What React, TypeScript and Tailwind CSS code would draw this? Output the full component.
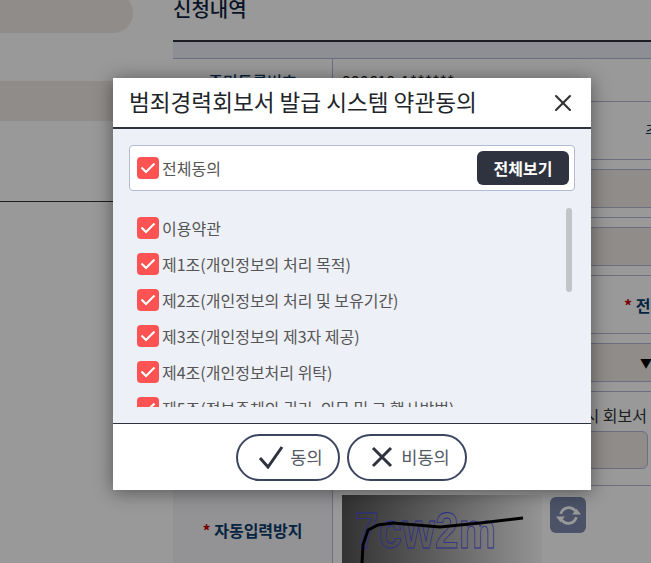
import { X } from 'lucide-react';

const font = { fontFamily: '"Noto Sans CJK KR", "Noto Sans", sans-serif' };

const terms = [
  '이용약관',
  '제1조(개인정보의 처리 목적)',
  '제2조(개인정보의 처리 및 보유기간)',
  '제3조(개인정보의 제3자 제공)',
  '제4조(개인정보처리 위탁)',
  '제5조(정보주체의 권리, 의무 및 그 행사방법)',
];

function CheckBox() {
  return (
    <span className="w-[22px] h-[22px] shrink-0 rounded bg-[#ff5252] flex items-center justify-center">
      <svg width="16" height="12" viewBox="0 0 16 12" fill="none" stroke="#fff" strokeWidth="2.2">
        <path d="M1.5 5.5 L6 10 L14.5 1.5" />
      </svg>
    </span>
  );
}

function Gap() {
  return <div className="h-[10px] border-b border-[#b2bad5]" />;
}

function Field() {
  return <div className="h-[38px] border-b border-[#b2bad5] bg-[#eee9e6]" />;
}

function Captcha() {
  return (
    <svg width="200" height="68" viewBox="0 0 200 68" className="bg-gradient-to-r from-[#555] to-[#f8f8f8]">
      <text x="13" y="53" fontSize="50" fontWeight="bold" fontFamily="Liberation Sans" fill="none" stroke="#4a4ae6" strokeWidth="0.8" textLength="141" lengthAdjust="spacingAndGlyphs">
        7cw2m
      </text>
      <path d="M20 68 L21 50 L26 35 L36 30 L51 28 L98 32 L138 28 L181 23" fill="none" stroke="#000" strokeWidth="3" />
    </svg>
  );
}

function SyncIcon() {
  return (
    <svg width="25" height="25" viewBox="0 0 24 24" fill="none" stroke="currentColor" strokeWidth="2.6">
      <path d="M4.5 10.5 A8 8 0 0 1 18.5 7.5" />
      <path d="M19.5 13.5 A8 8 0 0 1 5.5 16.5" />
      <path d="M15.5 11 L24 11 L19.7 5.5 Z" fill="currentColor" stroke="none" />
      <path d="M8.5 13 L0 13 L4.3 18.5 Z" fill="currentColor" stroke="none" />
    </svg>
  );
}

export default function App() {
  return (
    <div className="relative w-[651px] h-[563px] overflow-hidden bg-white" style={font}>
      {/* Page behind the dialog */}
      <div className="flex h-full">
        <div className="w-[173px] shrink-0">
          <div className="w-[133px] h-[40px] -mt-[7px] rounded-r-[20px] bg-[#eee9e6]" />
          <div className="h-[40px] mt-[48px] bg-[#eee9e6]" />
          <div className="h-[81px] border-b border-[#333]" />
        </div>
        <div className="w-[600px] shrink-0">
          <h2 className="h-[40px] -mt-[6px] text-[20px] font-medium leading-[30px] text-[#10233f]">신청내역</h2>
          <div className="h-[2px] mt-[6px] bg-[#2f3340]" />
          <div className="h-[17px] bg-[#eceef8] border-b border-[#b2bad5]" />

          <div className="flex h-[43px] border-b border-[#b2bad5]">
            <div className="w-[160px] border-r border-[#b2bad5] text-center text-[16px] font-medium leading-[44px] text-[#0a3d6b]">
              주민등록번호
            </div>
            <div className="pl-[9px] text-[16px] leading-[44px] text-[#222]">990619-1******</div>
          </div>
          <div className="h-[58px] border-b border-[#b2bad5] pl-[472px] text-[16px] leading-[58px] text-[#0a3d6b]">주소</div>
          <Gap />
          <Field />
          <Gap />
          <Gap />
          <Field />
          <Gap />
          <div className="h-[58px] border-b border-[#b2bad5] pl-[451px] text-[16px] font-bold leading-[58px] text-[#0a3d6b]">
            <span className="text-[#c00]">*</span> 전화번호
          </div>
          <Gap />
          <div className="h-[38px] border-b border-[#b2bad5] bg-[#eee9e6] pl-[467px] text-[12px] leading-[38px] text-black">▼</div>
          <Gap />
          <div className="h-[94px] border-b border-[#b2bad5] pl-[170px]">
            <div className="text-right w-[304px] text-[16px] leading-[22px] pt-[12px] text-[#333]">온라인 발급 시 회보서</div>
            <div className="w-[305px] h-[38px] mt-[5px] rounded-md border border-[#b2bad5] bg-[#eee9e6]" />
          </div>

          <div className="flex h-[100px]">
            <div className="w-[160px] border-r border-[#b2bad5] bg-[#f5f6fa] text-center text-[16px] font-bold pt-[32px] leading-[24px] text-[#0a3d6b]">
              <span className="text-[#c00]">*</span> 자동입력방지
            </div>
            <div className="pl-[9px] pt-[9px] flex gap-2">
              <Captcha />
              <div className="w-[36px] h-[36px] mt-[2px] rounded-md bg-[#7f8bad] flex items-center justify-center text-white">
                <SyncIcon />
              </div>
            </div>
          </div>
        </div>
      </div>

      <div className="absolute inset-0 bg-black/40" />

      {/* Dialog */}
      <div className="absolute left-[113px] top-[78px] w-[478px] h-[412px] bg-white flex flex-col shadow-[0_2px_18px_rgba(0,0,0,0.45)]">
        <div className="h-[51px] shrink-0 border-b-2 border-[#2f3340] pl-4 pr-[14px] flex items-center justify-between">
          <h1 className="text-[22.6px] font-normal text-[#212529] leading-none">범죄경력회보서 발급 시스템 약관동의</h1>
          <X className="w-[28px] h-[28px] text-[#333]" strokeWidth={1.8} />
        </div>

        <div className="relative h-[295px] shrink-0 bg-[#edf0f6] px-4 pt-4 border-b border-[#2f3340]">
          <div className="h-[46px] rounded border border-[#b2bad5] bg-white pl-[7px] pr-[5px] flex items-center justify-between">
            <label className="flex items-center gap-[3px] text-[16px] text-[#555]">
              <CheckBox />
              전체동의
            </label>
            <button className="w-[92px] h-[34px] rounded-md bg-[#2f3340] text-white text-[16px] font-bold">전체보기</button>
          </div>
          <div className="mt-[26px] h-[190px] overflow-hidden pl-2 flex flex-col gap-[14px]">
            {terms.map((t) => (
              <label key={t} className="flex items-center gap-[3px] text-[16px] text-[#555] whitespace-nowrap leading-[22px]">
                <CheckBox />
                {t}
              </label>
            ))}
          </div>
          <div className="absolute left-[453px] top-[79px] w-[6px] h-[84px] rounded-full bg-[#c1c4c9]" />
        </div>

        <div className="flex-1 flex items-center justify-center gap-[7px] pr-[1px]">
          <button className="w-[104px] h-[47px] rounded-full border-2 border-[#3a4560] pl-[5px] flex items-center justify-center gap-[6px] text-[17.6px] text-[#555b66]">
            <svg width="26" height="24" viewBox="0 0 26 24" fill="none" stroke="#2f3340" strokeWidth="3">
              <path d="M2 13 L10 22 L24 2" />
            </svg>
            동의
          </button>
          <button className="w-[120px] h-[47px] rounded-full border-2 border-[#3a4560] pl-[7px] flex items-center justify-center gap-[8px] text-[17.6px] text-[#555b66]">
            <svg width="22" height="22" viewBox="0 0 22 22" fill="none" stroke="#2f3340" strokeWidth="3">
              <path d="M2 2 L20 20 M20 2 L2 20" />
            </svg>
            비동의
          </button>
        </div>
      </div>
    </div>
  );
}
